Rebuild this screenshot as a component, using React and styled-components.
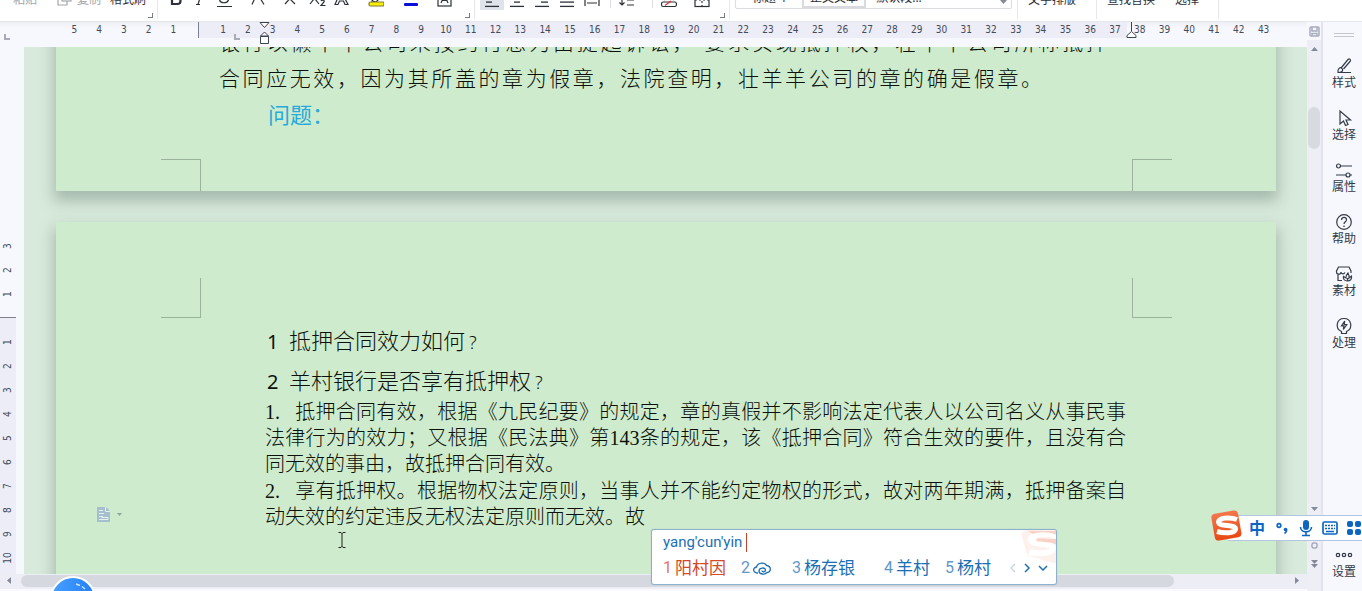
import React from "react";
import styled, { createGlobalStyle } from "styled-components";

const Global = createGlobalStyle`
  * { box-sizing: border-box; }
  body { margin: 0; overflow: hidden; }
  button { border: 0; padding: 0; margin: 0; background: none; font: inherit; color: inherit; cursor: pointer; }
  svg { display: block; }
`;

const UI_FONT = `"Noto Sans", "Noto Sans CJK SC", sans-serif`;

const Shell = styled.div`
  position: relative;
  display: flex;
  flex-direction: column;
  height: 100vh;
  overflow: hidden;
  background: #f7f8fe;
  color: #3c4350;
  font-family: ${UI_FONT};
  font-size: 12px;
`;

/* ---------- ribbon ---------- */
const Ribbon = styled.header`
  display: flex;
  align-items: flex-end;
  flex: none;
  height: 22px;
  overflow: hidden;
  background: #fff;
  border-bottom: 1px solid #e6e6ea;
`;
const Group = styled.div`
  position: relative;
  display: flex;
  align-items: flex-end;
  flex: none;
  width: ${(p) => p.$width}px;
  height: 48px;
  padding: 0 0 13px ${(p) => p.$pad}px;
  &::after {
    content: "";
    position: absolute;
    right: 0;
    bottom: 2px;
    height: 46px;
    border-right: 1px solid #e8e8ec;
  }
`;
const Launcher = styled.button`
  position: absolute;
  right: 5px;
  bottom: 3px;
  width: 5px;
  height: 5px;
  border-right: 1px solid #777c85;
  border-bottom: 1px solid #777c85;
`;
const TextTool = styled.button`
  display: flex;
  align-items: center;
  gap: 5px;
  height: 16px;
  line-height: 16px;
  white-space: nowrap;
  margin-right: ${(p) => p.$after || 0}px;
  color: ${(p) => (p.$muted ? "#a3a6ac" : "#2c3038")};
`;
const IconTool = styled.button`
  display: flex;
  align-items: center;
  justify-content: center;
  width: 24px;
  height: 20px;
  margin-left: ${(p) => p.$gap || 0}px;
  margin-bottom: -2px;
  background: ${(p) => (p.$active ? "#dfe3ea" : "transparent")};
  color: #2c3038;
`;
const Rule = styled.span`
  width: 1px;
  height: 18px;
  margin: 0 ${(p) => p.$after}px 0 ${(p) => p.$before}px;
  background: #dcdde2;
`;
const Gallery = styled.div`
  display: flex;
  align-items: flex-end;
  width: 277px;
  height: 34px;
  margin-bottom: -1px;
  border: 1px solid #dadce0;
  border-radius: 2px;
`;
const StyleItem = styled.button`
  width: ${(p) => p.$width}px;
  height: 26px;
  line-height: 16px;
  padding-bottom: ${(p) => (p.$on ? 0 : 2)}px;
  border: ${(p) => (p.$on ? "2px solid #d8dade" : "0")};
  color: #2c3038;
  white-space: nowrap;
  display: flex;
  align-items: flex-end;
  justify-content: center;
`;
const GalleryMore = styled.button`
  margin: 0 4px 4px auto;
`;

/* ---------- workspace ---------- */
const Main = styled.main`
  display: flex;
  flex: 1;
  min-height: 0;
`;
const Editor = styled.section`
  display: flex;
  flex-direction: column;
  flex: 1;
  min-width: 0;
`;
const Ruler = styled.div`
  position: relative;
  flex: none;
  height: 25px;
  padding: 0 31px 0 62px;
  background: linear-gradient(#eef0f4, #f7f8fe 6px);
`;
const RulerTrack = styled.div`
  display: grid;
  grid-template-columns: repeat(49, 1fr);
  height: 16px;
`;
const Tick = styled.span`
  position: relative;
  line-height: 16px;
  text-align: center;
  font-family: "DejaVu Sans Condensed", "DejaVu Sans", sans-serif;
  font-size: 10px;
  color: #454a58;
  background: ${(p) =>
    p.$kind === "zero"
      ? "linear-gradient(90deg, transparent 12px, #7d8090 12px 13px, #ecedf6 13px)"
      : p.$kind === "in"
      ? "#ecedf6"
      : "transparent"};
`;
const Marker = styled.svg`
  position: absolute;
  top: ${(p) => p.$top}px;
  left: -1px;
  z-index: 1;
`;
const TabStop = styled.i`
  position: absolute;
  top: 12px;
  left: ${(p) => p.$left}px;
  width: 6px;
  height: 6px;
  border-left: 2px solid #a9acb6;
  border-bottom: 2px solid #a9acb6;
  z-index: 1;
`;
const Canvas = styled.div`
  display: flex;
  flex: 1;
  min-height: 0;
`;
const SideRuler = styled.div`
  flex: none;
  width: 24px;
  padding-top: 187px;
  overflow: hidden;
`;
const SideTick = styled.div`
  width: 16px;
  height: 24px;
  line-height: 24px;
  text-align: center;
  font-family: "DejaVu Sans Condensed", "DejaVu Sans", sans-serif;
  font-size: 10px;
  color: #454a58;
  background: ${(p) =>
    p.$kind === "zero"
      ? "linear-gradient(transparent 11px, #7d8090 11px 12px, #ecedf6 12px)"
      : p.$kind === "in"
      ? "#ecedf6"
      : "transparent"};
  span {
    display: block;
    width: 16px;
    transform: rotate(-90deg);
  }
`;
const Desk = styled.div`
  flex: 1;
  min-width: 0;
  padding: 0 31px 0 32px;
  overflow: hidden;
  background: #d8eadb;
`;
const Sheet = styled.article`
  position: relative;
  background: #cfebcd;
  box-shadow: 0 8px 14px 2px rgba(95, 120, 110, 0.42);
  color: #0b120b;
  margin-bottom: 31px;
  min-height: ${(p) => p.$min || 0}px;
  padding-top: ${(p) => p.$top || 0}px;
  font-family: "Liberation Serif", "Noto Sans CJK SC", sans-serif;
  font-weight: 300;
`;
const SpacedText = styled.div`
  margin-top: -22px;
  padding: 0 169px 0 163px;
  font-size: 21px;
  line-height: 36px;
`;
const SpacedLine = styled.p`
  margin: 0 ${(p) => p.$short || 0}px 0 0;
  text-align: justify;
  text-align-last: justify;
`;
const Question = styled.h2`
  margin: 0 0 24px 49px;
  font-size: 22px;
  font-weight: 400;
  line-height: 38px;
  color: #25aadb;
`;
const Corners = styled.div`
  display: flex;
  justify-content: space-between;
  padding: 0 104px 0 105px;
`;
const Corner = styled.i`
  width: 40px;
  height: ${(p) => (p.$foot ? 32 : 40)}px;
  border: 0 solid #9bb39b;
  border-top-width: ${(p) => (p.$foot ? 1 : 0)}px;
  border-bottom-width: ${(p) => (p.$foot ? 0 : 1)}px;
  border-right-width: ${(p) => (p.$right ? 0 : 1)}px;
  border-left-width: ${(p) => (p.$right ? 1 : 0)}px;
`;
const Answer = styled.div`
  padding: 7px 150px 0 209px;
`;
const Heading = styled.h3`
  display: flex;
  align-items: baseline;
  margin: 0 0 6px 2px;
  font-size: 22px;
  font-weight: 300;
  line-height: 34px;
  &:last-of-type { margin-bottom: 0; }
`;
const HeadNumber = styled.span`
  width: 22px;
  font-family: "Noto Sans", sans-serif;
  font-weight: 400;
  font-size: 20px;
`;
const HeadMark = styled.span`
  padding-left: 4px;
  font-family: "Noto Sans", sans-serif;
  font-size: 18px;
`;
const Para = styled.p`
  margin: 0 0 1px;
  font-size: 20px;
  line-height: 26px;
  text-align: justify;
`;
const ParaNumber = styled.span`
  display: inline-block;
  width: 30px;
  text-align: left;
  text-align-last: left;
`;
const PasteTag = styled.button`
  position: absolute;
  left: 41px;
  top: 285px;
  display: flex;
  align-items: center;
  gap: 7px;
`;
const IBeam = styled.svg`
  position: absolute;
  left: 282px;
  top: 310px;
`;

/* ---------- scrollbars ---------- */
const HScroll = styled.div`
  display: flex;
  align-items: center;
  flex: none;
  height: 17px;
  padding: 0 8px 2px 7px;
  background: #ededf6;
  border-bottom: 2px solid #f9f9ff;
`;
const HThumb = styled.div`
  flex: 1;
  height: 12px;
  margin: 0 121px 0 10px;
  border-radius: 6px;
  background: #d5d8de;
`;
const VScroll = styled.div`
  display: flex;
  flex-direction: column;
  align-items: center;
  flex: none;
  width: 16px;
  padding: 4px 0 23px 0;
  background: linear-gradient(#f7f8fe 18px, #eeeef7 18px);
  border-right: 2px solid #e4e4ef;
`;
const ScrollUp = styled.button`
  margin-top: 10px;
`;
const VThumb = styled.div`
  width: 12px;
  height: 42px;
  margin-top: 56px;
  border-radius: 6px;
  background: #d7dae0;
`;
const VButtons = styled.div`
  display: flex;
  flex-direction: column;
  align-items: center;
  margin-top: auto;
`;
const PageNav = styled.div`
  display: flex;
  flex-direction: column;
  align-items: center;
  gap: 11px;
  margin-top: 31px;
`;

/* ---------- task pane ---------- */
const Pane = styled.aside`
  display: flex;
  flex-direction: column;
  align-items: center;
  flex: none;
  width: 39px;
  padding: 11px 0 11px 3px;
  background: #f7f8fe;
`;
const Grip = styled.div`
  width: 20px;
  height: 4px;
  margin-bottom: 20px;
  border-top: 1px solid #c5c8d0;
  border-bottom: 1px solid #c5c8d0;
`;
const PaneButton = styled.button`
  display: flex;
  flex-direction: column;
  align-items: center;
  height: 52px;
  color: #343a46;
  line-height: 16px;
  &:last-child { margin-top: auto; height: 34px; }
  svg { flex: none; }
`;

/* ---------- input method ---------- */
const ImeBox = styled.div`
  position: absolute;
  left: 651px;
  top: 529px;
  width: 406px;
  height: 56px;
  padding: 2px 8px 0 11px;
  overflow: hidden;
  background: #fff;
  border: 1px solid #8db0cd;
  border-radius: 3px;
  box-shadow: 0 0 1px #8db0cd;
  font-family: Roboto, "Noto Sans CJK SC", sans-serif;
  color: #1b6fb5;
`;
const Composing = styled.div`
  display: flex;
  height: 20px;
  align-items: center;
  label { display: flex; border-right: 1px solid #c8432b; height: 19px; }
  input {
    width: 83px;
    padding: 0;
    border: 0;
    outline: 0;
    background: none;
    font: 16px "Liberation Sans", sans-serif;
    font-family: Roboto, sans-serif;
    font-size: 15px;
    color: #1b6fb5;
  }
`;
const Candidates = styled.div`
  display: flex;
  align-items: center;
  height: 32px;
`;
const Candidate = styled.button`
  display: flex;
  align-items: center;
  gap: 3px;
  margin-right: ${(p) => p.$after}px;
  font-size: 17px;
  line-height: 24px;
  white-space: nowrap;
  color: ${(p) => (p.$first ? "#d2492a" : "#1b6fb5")};
  span { font-size: 16px; width: 9px; color: ${(p) => (p.$first ? "#e2755c" : "#5f97c9")}; }
`;
const Pager = styled.div`
  display: flex;
  align-items: center;
  gap: 8px;
  margin-left: auto;
`;
const Watermark = styled.svg`
  position: absolute;
  right: -3px;
  top: -3px;
`;
const ImeBar = styled.div`
  position: absolute;
  right: 0;
  top: 515px;
  display: flex;
  align-items: center;
  width: 134px;
  height: 26px;
  padding-left: 21px;
  gap: 9px;
  background: #fff;
  border-top: 1px solid #b4c5e2;
  border-bottom: 1px solid #b4c5e2;
  color: #0d67c2;
`;
const ImeMode = styled.button`
  font-size: 16px;
  font-weight: 700;
  line-height: 20px;
`;
const ImeLogo = styled.svg`
  position: absolute;
  left: -18px;
  top: -6px;
`;
const Ball = styled.button`
  position: absolute;
  left: 50px;
  top: 576px;
  width: 46px;
  height: 46px;
  border: 2px solid #fff;
  border-radius: 50%;
  background: linear-gradient(100deg, #4aa0ff, #1d7df5);
`;

/* ---------- drawings ---------- */
const Svg = ({ w, h, children, sw = 1.2, ...rest }) => (
  <svg width={w} height={h} viewBox={`0 0 ${w} ${h}`} fill="none" stroke="currentColor" strokeWidth={sw} {...rest}>
    {children}
  </svg>
);

const Lines = ({ rows }) => (
  <Svg w={16} h={16} sw={1.3}>
    {rows.map(([a, b], i) => (
      <path key={i} d={`M${a} ${1.5 + i * 4.3}H${b}`} />
    ))}
  </Svg>
);

const fontTools = [
  ["加粗", 0, <Svg w={16} h={16} sw={2.2}><path d="M4 2V12H9.500C13.500 12 13.500 6 9.500 6H4" /></Svg>],
  ["倾斜", 0, <Svg w={16} h={16}><path d="M9.500 1L6 12.500M4 12.500H8" /></Svg>],
  ["下划线", 0, <Svg w={16} h={16}><path d="M3.500 1V7C3.500 12 12.500 12 12.500 7V1M1 14.500H16" /></Svg>],
  ["拼音", 10, <Svg w={16} h={16}><path d="M5 6L2 12.500M10 6L14 12.500M6 6H9" /></Svg>],
  ["上标", 8, <Svg w={16} h={16}><path d="M3 12L12 2M3 2L13 12" /></Svg>],
  ["下标", 4, <Svg w={18} h={16}><path d="M1 12L9 2M2 2L10 12M12 9C13 7.500 16 8 15 10L12 13.500H16.500" /></Svg>],
  ["文字效果", 0, <Svg w={16} h={16}><path d="M1 12.500L6 1H8L14 12.500H11L9.500 9H5.500L4 12.500Z" /></Svg>],
  ["突出显示", 10, <Svg w={16} h={16}><path d="M4 9L10 2L13 5L8 10Z" /><rect x="1" y="10" width="15" height="4" rx="1.500" fill="#ffee00" stroke="#7c7c40" /></Svg>],
  ["字体颜色", 10, <Svg w={16} h={16}><path d="M4 8L8 0L12 8" /><rect x="2" y="11" width="14" height="3" rx="1" fill="#0b10d8" stroke="none" /></Svg>],
  ["字符底纹", 10, <Svg w={16} h={16}><rect x="2" y="1" width="13" height="13" /><path d="M5 11L8.500 3L12 11M6 8.500H11" /></Svg>],
];

const alignTools = [
  ["左对齐", [[2, 10], [2, 14], [2, 8], [1, 15]]],
  ["居中", [[3, 13], [1, 15], [5, 11], [1, 15]]],
  ["右对齐", [[6, 14], [1, 15], [7, 14], [1, 15]]],
  ["两端对齐", [[1, 15], [1, 15], [1, 15], [1, 15]]],
];

const ticks = [5, 4, 3, 2, 1, 0, ...Array.from({ length: 43 }, (_, i) => i + 1)];
const sideTicks = [3, 2, 1, 0, ...Array.from({ length: 11 }, (_, i) => i + 1)];

const paneTools = [
  ["样式", <Svg w={18} h={18}><path d="M3 15.500C2.500 12 5 9.500 7 11.500C9 14 6 15.500 3 15.500ZM3 15.500H16M6.500 10.500L13 2.500C14.500 1 16.500 3 15 4.500L8.500 12" /></Svg>],
  ["选择", <Svg w={18} h={18}><path d="M5 2V15L8.500 12L10.500 16.500L13 15.500L11 11H15.500Z" /></Svg>],
  ["属性", <Svg w={18} h={18}><circle cx="3.500" cy="5" r="2" /><path d="M5.500 5H17M1 14H11" /><circle cx="13" cy="14" r="2" /><path d="M15 14H17" /></Svg>],
  ["帮助", <Svg w={18} h={18}><circle cx="9" cy="9" r="7.300" /><path d="M6.500 7C6.500 3.500 11.800 3.500 11.500 7C11.300 8.800 9 8.800 9 11M9 12.500V14" /></Svg>],
  ["素材", <Svg w={18} h={18}><path d="M7 15.500H3V9M3 9C1 8.500 1.500 7 1.500 6L3.500 2H14L16 6V8M3 9C5 9.500 6 8.500 6 7M6 7C6.500 9.500 9 9.500 10 7.500" /><path d="M12.500 16C9 16 8 13.500 8.500 11.500L11 13C11 11 12 9 13 8C14 10 14.500 11.500 14 13L16.500 11C17 14 15.500 16 12.500 16ZM12.500 16V13" /></Svg>],
  ["处理", <Svg w={18} h={18}><path d="M6.500 14.500C-0.500 11.500 1.500 1.500 9 1.500C16.500 1.500 18.500 11.500 11.500 14.500V16.500H6.500Z" /><path d="M9.700 4L6.500 8.800H9L8.300 12.500L11.800 7.500H9.200Z" /></Svg>],
];

const Arrow = ({ dir }) => {
  const d = { up: "M0 4L3.500 0L7 4Z", down: "M0 0H7L3.500 4Z", left: "M4 0V7L0 3.500Z", right: "M0 0V7L4 3.500Z" }[dir];
  const wide = dir === "up" || dir === "down";
  return (
    <svg width={wide ? 7 : 4} height={wide ? 4 : 7} fill="#858a9a">
      <path d={d} />
    </svg>
  );
};

export default function App() {
  return (
    <Shell lang="zh-CN">
      <Global />
      <Ribbon>
        <Group $width={158} $pad={13}>
          <TextTool $muted $after={20}>粘贴</TextTool>
          <TextTool $muted $after={9}>
            <Svg w={15} h={16}><rect x="5" y="1" width="9" height="8" /><path d="M5 4H1V13H10V9" /></Svg>
            复制
          </TextTool>
          <TextTool>格式刷</TextTool>
          <Launcher aria-label="剪贴板设置" />
        </Group>
        <Group $width={317} $pad={6}>
          {fontTools.map(([name, gap, icon]) => (
            <IconTool key={name} aria-label={name} $gap={gap}>{icon}</IconTool>
          ))}
          <Launcher aria-label="字体设置" />
        </Group>
        <Group $width={255} $pad={5}>
          {alignTools.map(([name, rows], i) => (
            <IconTool key={name} aria-label={name} $active={i === 0} $gap={i ? 1 : 0}><Lines rows={rows} /></IconTool>
          ))}
          <IconTool aria-label="分散对齐" $gap={1}>
            <Svg w={16} h={16}><path d="M1 1V14M15 1V14M3 4H13M3 11H13" /></Svg>
          </IconTool>
          <Rule $before={6} $after={4} />
          <IconTool aria-label="行距">
            <Svg w={16} h={16}><path d="M3 0V13M0.500 10.500L3 13L5.500 10.500M8 3H15M8 8H15M8 13H15" /></Svg>
          </IconTool>
          <Rule $before={13} $after={4} />
          <IconTool aria-label="底纹">
            <Svg w={16} h={16}><path d="M3 8L8 3L13 8M2 10H14C16 10 16 14.500 14 14.500H2C0 14.500 0 10 2 10Z" /><path d="M4 13.500L10 9" stroke="#d33" /></Svg>
          </IconTool>
          <IconTool aria-label="边框" $gap={9}>
            <Svg w={16} h={16}><rect x="1" y="1" width="14" height="13.500" /><path d="M8 1V14M1 8H15" strokeDasharray="2 2" /></Svg>
          </IconTool>
          <Launcher aria-label="段落设置" />
        </Group>
        <Group $width={288} $pad={5}>
          <Gallery>
            <StyleItem $width={66}>标题 4</StyleItem>
            <StyleItem $on $width={64}>正文文本</StyleItem>
            <StyleItem $width={66}>默认段...</StyleItem>
            <GalleryMore aria-label="更多样式"><Arrow dir="down" /></GalleryMore>
          </Gallery>
        </Group>
        <Group $width={79} $pad={10}><TextTool>文字排版</TextTool></Group>
        <Group $width={122} $pad={10}>
          <TextTool $after={20}>查找替换</TextTool>
          <TextTool>选择</TextTool>
        </Group>
      </Ribbon>

      <Main>
        <Editor>
          <Ruler>
            <TabStop $left={4} />
            <TabStop $left={234} />
            <RulerTrack>
              {ticks.map((n, i) => (
                <Tick key={i} $kind={i === 5 ? "zero" : i > 5 && n < 38 ? "in" : "out"}>
                  {n === 0 ? "" : n}
                  {i === 8 && (
                    <Marker $top={0} width="11" height="23" fill="#fff" stroke="#3c4350">
                      <path d="M1 .5H10L5.500 5.500ZM5.500 10L1.500 14H9.500ZM1.500 14.500H9.500V21.500H1.500Z" />
                    </Marker>
                  )}
                  {n === 38 && (
                    <Marker $top={0} width="11" height="17" fill="#fff" stroke="#3c4350">
                      <path d="M5.500 0V9M5.500 9.500L1 13.500V15.500H10V13.500Z" />
                    </Marker>
                  )}
                </Tick>
              ))}
            </RulerTrack>
          </Ruler>
          <Canvas>
            <SideRuler>
              {sideTicks.map((n, i) => (
                <SideTick key={i} $kind={n === 0 ? "zero" : i > 3 ? "in" : "out"}>
                  <span>{n === 0 || n === 11 ? "" : n}</span>
                </SideTick>
              ))}
            </SideRuler>
            <Desk>
              <Sheet>
                <SpacedText>
                  <SpacedLine>银行以懒羊羊公司未按约付息为由提起诉讼， 要求实现抵押权，壮羊羊公司所称抵押</SpacedLine>
                  <SpacedLine $short={65}>合同应无效，因为其所盖的章为假章，法院查明，壮羊羊公司的章的确是假章。</SpacedLine>
                  <Question>问题：</Question>
                </SpacedText>
                <Corners>
                  <Corner $foot />
                  <Corner $foot $right />
                </Corners>
              </Sheet>
              <Sheet $min={700} $top={56}>
                <Corners>
                  <Corner />
                  <Corner $right />
                </Corners>
                <Answer>
                  <Heading><HeadNumber>1</HeadNumber>抵押合同效力如何<HeadMark>?</HeadMark></Heading>
                  <Heading><HeadNumber>2</HeadNumber>羊村银行是否享有抵押权<HeadMark>?</HeadMark></Heading>
                  <Para>
                    <ParaNumber>1.</ParaNumber>抵押合同有效，根据《九民纪要》的规定，章的真假并不影响法定代表人以公司名义从事民事法律行为的效力；又根据《民法典》第143条的规定，该《抵押合同》符合生效的要件，且没有合同无效的事由，故抵押合同有效。
                  </Para>
                  <Para>
                    <ParaNumber>2.</ParaNumber>享有抵押权。根据物权法定原则，当事人并不能约定物权的形式，故对两年期满，抵押备案自动失效的约定违反无权法定原则而无效。故
                  </Para>
                </Answer>
                <PasteTag aria-label="粘贴选项">
                  <svg width="13" height="15" fill="none" stroke="#e6f1ee">
                    <path d="M0 0H9L13 4V15H0Z" fill="#a5bfcf" stroke="none" />
                    <path d="M8.500 0V4.500H13M2 3.500H6M2 6.500H7M2 9.500H6M4.500 10.500H11V12.500H2" />
                  </svg>
                  <svg width="5" height="3" fill="#8fa596"><path d="M0 0H5L2.500 3Z" /></svg>
                </PasteTag>
                <IBeam width="8" height="16" fill="none" stroke="#1d241d">
                  <path d="M0.500 .5H3L4 1.500L5 .5H7.500M4 1V15M0.500 15.500H3L4 14.500L5 15.500H7.500" />
                </IBeam>
              </Sheet>
            </Desk>
          </Canvas>
          <HScroll>
            <Arrow dir="left" />
            <HThumb />
            <Arrow dir="right" />
          </HScroll>
        </Editor>

        <VScroll>
          <Svg w={11} h={11} sw={1.5} color="#a7abbd">
            <rect x="1" y="1" width="9" height="9" rx="1" /><path d="M3 1V5H8V1M3 10V7.500H8V10" />
          </Svg>
          <ScrollUp aria-label="向上滚动"><Arrow dir="up" /></ScrollUp>
          <VThumb />
          <VButtons>
            <Arrow dir="down" />
            <PageNav>
              <svg width="7" height="7" fill="none" stroke="#858a9a"><rect x="1" y="1" width="5" height="5" rx="1" /></svg>
              <div><Arrow dir="down" /><Arrow dir="down" /></div>
            </PageNav>
          </VButtons>
        </VScroll>

        <Pane>
          <Grip />
          {paneTools.map(([name, icon]) => (
            <PaneButton key={name}>{icon}{name}</PaneButton>
          ))}
          <PaneButton>
            <Svg w={18} h={18}><circle cx="3" cy="9" r="1.700" /><circle cx="9" cy="9" r="1.700" /><circle cx="15" cy="9" r="1.700" /></Svg>
            设置
          </PaneButton>
        </Pane>
      </Main>

      <Ball aria-label="悬浮球">
        <svg width="42" height="42" fill="none" stroke="#cfe4ff" strokeWidth="1.500"><path d="M24 6L28 7.500M30 8.500L33 11" /></svg>
      </Ball>

      <ImeBar>
        <ImeLogo width="34" height="32" viewBox="0 0 34 32">
          <defs>
            <linearGradient id="logo" x1="0" y1="0" x2="0" y2="1">
              <stop offset="0" stopColor="#f2784e" /><stop offset="1" stopColor="#e84912" />
            </linearGradient>
          </defs>
          <rect x="3" y="2" width="27" height="27" rx="4" fill="url(#logo)" transform="rotate(-10 16.500 16)" />
          <path d="M27 9.500C19 6.500 8.500 8 8.500 12C8.500 17 25.500 14 25.500 19C25.500 23.500 14 23.500 7 21.500" fill="none" stroke="#fff" strokeWidth="5" />
        </ImeLogo>
        <ImeMode>中</ImeMode>
        <button aria-label="中文标点">
          <svg width="16" height="16" fill="none" stroke="currentColor" strokeWidth="1.700">
            <circle cx="5" cy="5.500" r="1.800" />
            <circle cx="11.500" cy="9.500" r="1.800" fill="currentColor" stroke="none" />
            <path d="M12.500 9.500C12.800 11.500 12 12.500 10.500 13.500" />
          </svg>
        </button>
        <button aria-label="语音">
          <svg width="14" height="18" fill="none" stroke="currentColor" strokeWidth="1.600">
            <rect x="4" y="1" width="6" height="10" rx="3" fill="currentColor" stroke="none" />
            <path d="M1.500 8C1.500 14.500 12.500 14.500 12.500 8M7 13V16M3 16.500H11" />
          </svg>
        </button>
        <button aria-label="键盘">
          <svg width="16" height="14" fill="none" stroke="currentColor">
            <rect x="1" y="1" width="14" height="12" rx="1.500" strokeWidth="1.700" />
            <path d="M3 4.500H13M3 7.500H13" strokeWidth="1.500" strokeDasharray="2 1" /><path d="M4 10.500H12" strokeWidth="1.500" />
          </svg>
        </button>
        <button aria-label="工具箱">
          <svg width="14" height="14" fill="currentColor">
            <rect x="0" y="0" width="6" height="6" rx="2" /><rect x="8" y="0" width="6" height="6" rx="2" />
            <rect x="0" y="8" width="6" height="6" rx="2" /><rect x="8" y="8" width="6" height="6" rx="2" />
          </svg>
        </button>
      </ImeBar>

      <ImeBox>
        <Watermark width="40" height="36" fill="none">
          <path d="M2 6L10 2H40V36H34L8 28Z" fill="#fdf1ed" />
          <path d="M38 9C28 5 11 7 12 13C13 19 34 15 34 21C34 27 18 27 10 25" stroke="#fff" strokeWidth="6" />
          <path d="M9 4H40V9C30 4 20 5 14 7Z" fill="#f9d2c6" />
          <path d="M17 14C25 16 32 14 38 18V12C32 12 24 12 19 11Z" fill="#f9d2c6" />
        </Watermark>
        <Composing>
          <label><input aria-label="拼音输入" defaultValue="yang'cun'yin" /></label>
        </Composing>
        <Candidates>
          <Candidate $first $after={15}><span>1</span>阳村因</Candidate>
          <Candidate $after={21}>
            <span>2</span>
            <Svg w={18} h={13} sw={1.3}>
              <path d="M5 11C0 11 -1 6 3.500 5C5 0 12 0 13.500 3.500C18.500 4 18.500 10 14 10.500C12 13 6 12.500 6 9C6 5.500 12 5 12.500 8C12.500 10 9 10.500 9 8.500" />
            </Svg>
          </Candidate>
          <Candidate $after={29}><span>3</span>杨存银</Candidate>
          <Candidate $after={15}><span>4</span>羊村</Candidate>
          <Candidate $after={0}><span>5</span>杨村</Candidate>
          <Pager>
            <button aria-label="上一页"><Svg w={6} h={10} color="#c3d2e0"><path d="M5 1L1 5L5 9" /></Svg></button>
            <button aria-label="下一页"><Svg w={6} h={10} sw={1.5}><path d="M1 1L5 5L1 9" /></Svg></button>
            <button aria-label="展开"><Svg w={10} h={6} sw={1.5}><path d="M1 1L5 5L9 1" /></Svg></button>
          </Pager>
        </Candidates>
      </ImeBox>
    </Shell>
  );
}
